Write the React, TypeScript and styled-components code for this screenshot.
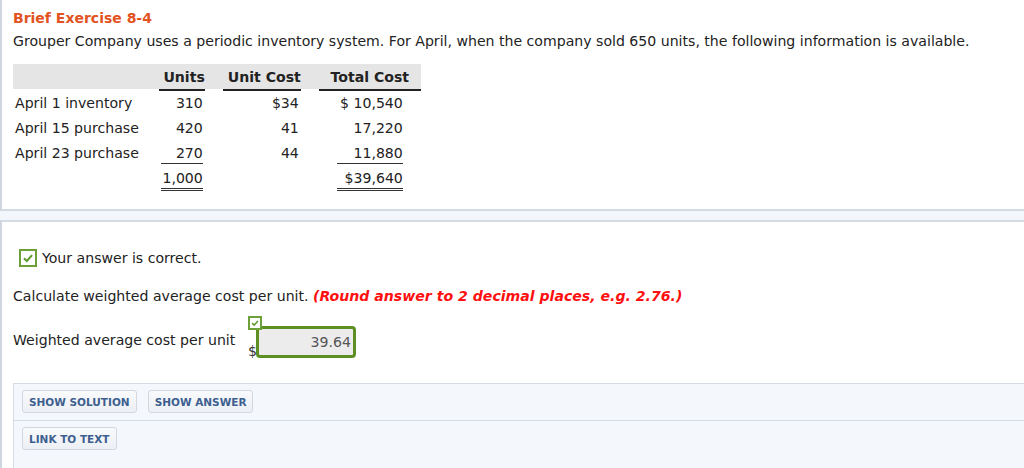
import React from 'react';
import styled, { createGlobalStyle } from 'styled-components';

const GlobalStyle = createGlobalStyle`
	html, body {
		margin: 0;
		padding: 0;
		background: #f3f6fa;
	}
	body {
		font-family: 'DejaVu Sans', Verdana, sans-serif;
		font-size: 14.1px;
		color: #222;
	}
`;

type Row = {
	label: string;
	units: string;
	unitCost: string;
	total: string;
	lineUnder?: boolean;
};

const rows: Row[] = [
	{ label: 'April 1 inventory', units: '310', unitCost: '$34', total: '$ 10,540' },
	{ label: 'April 15 purchase', units: '420', unitCost: '41', total: '17,220' },
	{ label: 'April 23 purchase', units: '270', unitCost: '44', total: '11,880', lineUnder: true },
];

const CheckIcon = ({ size }: { size: number }) => (
	<svg width={size} height={size} viewBox="0 0 12 12">
		<path d="M2.5 6.2 L5 8.5 L9.5 3.5" fill="none" stroke="#5f9a2b" strokeWidth="1.8" />
	</svg>
);

const App: React.FC = () => {
	return (
		<>
			<GlobalStyle />
			<Page>
				<QuestionPanel>
					<Title>Brief Exercise 8-4</Title>
					<Intro>
						Grouper Company uses a periodic inventory system. For April, when the company sold 650 units, the
						following information is available.
					</Intro>
					<DataTable>
						<thead>
							<tr>
								<HeadCell />
								<HeadCell $w={46}>Units</HeadCell>
								<Gap />
								<HeadCell $w={78}>Unit Cost</HeadCell>
								<Gap />
								<HeadCell $w={102} $center>
									Total Cost
								</HeadCell>
							</tr>
						</thead>
						<tbody>
							{rows.map((r) => (
								<tr key={r.label}>
									<LabelCell>{r.label}</LabelCell>
									<NumCell>
										<Figure $under={r.lineUnder ? 'single' : undefined}>{r.units}</Figure>
									</NumCell>
									<td />
									<NumCell>
										<Figure>{r.unitCost}</Figure>
									</NumCell>
									<td />
									<NumCell $padRight={18}>
										<Figure $under={r.lineUnder ? 'single' : undefined} $minW={66}>
											{r.total}
										</Figure>
									</NumCell>
								</tr>
							))}
							<tr>
								<LabelCell />
								<NumCell>
									<Figure $under="double">1,000</Figure>
								</NumCell>
								<td />
								<NumCell />
								<td />
								<NumCell $padRight={18}>
									<Figure $under="double" $minW={66}>
										$39,640
									</Figure>
								</NumCell>
							</tr>
						</tbody>
					</DataTable>
				</QuestionPanel>
				<AnswerPanel>
					<Correct>
						<CheckBox $size={18}>
							<CheckIcon size={14} />
						</CheckBox>
						Your answer is correct.
					</Correct>
					<Prompt>
						Calculate weighted average cost per unit. <Hint>(Round answer to 2 decimal places, e.g. 2.76.)</Hint>
					</Prompt>
					<AnswerRow>
						<AnswerLabel>Weighted average cost per unit</AnswerLabel>
						<InputWrap>
							<SmallCheck>
								<CheckBox $size={14}>
									<CheckIcon size={10} />
								</CheckBox>
							</SmallCheck>
							<Dollar>$</Dollar>
							<AnswerInput>39.64</AnswerInput>
						</InputWrap>
					</AnswerRow>
					<ActionBar>
						<ActionRow>
							<ActionButton>SHOW SOLUTION</ActionButton>
							<ActionButton>SHOW ANSWER</ActionButton>
						</ActionRow>
						<ActionRow>
							<ActionButton>LINK TO TEXT</ActionButton>
						</ActionRow>
					</ActionBar>
				</AnswerPanel>
			</Page>
		</>
	);
};

const Page = styled.div`
	display: flex;
	flex-direction: column;
	gap: 9px;
	width: 1024px;
`;

const QuestionPanel = styled.section`
	background: #fff;
	border-left: 2px solid #cfd6e0;
	border-bottom: 2px solid #d4dbe5;
	padding: 9px 0 18px 11px;
	height: 182px;
`;

const Title = styled.h2`
	margin: 0;
	color: #e2531f;
	font-size: 14px;
	font-weight: bold;
	line-height: 18px;
`;

const Intro = styled.p`
	margin: 4px 0 0;
	line-height: 20px;
`;

const DataTable = styled.table`
	margin-top: 13px;
	border-collapse: collapse;
	font-size: 14.1px;
	thead tr {
		background: #e5e5e5;
	}
`;

const HeadCell = styled.th<{ $w?: number; $center?: boolean }>`
	width: ${(p) => (p.$w ? `${p.$w}px` : 'auto')};
	padding: 3px 0 2px;
	font-weight: bold;
	text-align: ${(p) => (p.$center ? 'center' : 'right')};
	border-bottom: ${(p) => (p.$w ? '2px solid #222' : '2px solid #fff')};
	line-height: 20px;
`;

const Gap = styled.th`
	width: 16px;
	border-bottom: 2px solid #fff;
`;

const LabelCell = styled.td`
	padding: 1px 20px 1px 2px;
	line-height: 23px;
	white-space: nowrap;
`;

const NumCell = styled.td<{ $padRight?: number }>`
	text-align: right;
	padding: 1px ${(p) => p.$padRight ?? 2}px 1px 0;
	line-height: 23px;
	vertical-align: top;
`;

const Figure = styled.span<{ $under?: 'single' | 'double'; $minW?: number }>`
	display: inline-block;
	text-align: right;
	min-width: ${(p) => p.$minW ?? 42}px;
	line-height: 20px;
	border-bottom: ${(p) =>
		p.$under === 'double' ? '3px double #333' : p.$under === 'single' ? '1px solid #333' : '1px solid transparent'};
`;

const AnswerPanel = styled.section`
	background: #fff;
	border-left: 2px solid #cfd6e0;
	border-top: 2px solid #d4dbe5;
	padding: 27px 0 0 11px;
	flex: 1;
`;

const Correct = styled.div`
	display: flex;
	align-items: center;
	gap: 5px;
	margin-left: 6px;
`;

const CheckBox = styled.span<{ $size: number }>`
	display: inline-flex;
	align-items: center;
	justify-content: center;
	box-sizing: border-box;
	width: ${(p) => p.$size}px;
	height: ${(p) => p.$size}px;
	border: 2px solid #6ea03a;
	background: #fff;
`;

const Prompt = styled.p`
	margin: 20px 0 0;
	line-height: 18px;
`;

const Hint = styled.em`
	color: #ff1010;
	font-weight: bold;
`;

const AnswerRow = styled.div`
	display: flex;
	align-items: flex-end;
	margin-top: 11px;
`;

const AnswerLabel = styled.span`
	line-height: 18px;
	padding-bottom: 9px;
	width: 235px;
`;

const InputWrap = styled.div`
	position: relative;
	display: flex;
	align-items: flex-end;
	padding-top: 10px;
`;

const SmallCheck = styled.span`
	position: absolute;
	left: 0;
	top: 0;
	display: flex;
`;

const Dollar = styled.span`
	line-height: 14px;
	color: #333;
	margin-right: -1px;
`;

const AnswerInput = styled.div`
	box-sizing: border-box;
	width: 100px;
	height: 32px;
	border: 3px solid #5d8f23;
	border-radius: 4px;
	background: #ececec;
	color: #555;
	text-align: right;
	padding: 5px 2px 0 0;
`;

const ActionBar = styled.div`
	margin-top: 25px;
	background: #f4f7fb;
	border-top: 1px solid #d5dce6;
	border-left: 1px solid #d5dce6;
	border-bottom: 1px solid #d5dce6;
	height: 86px;
`;

const ActionRow = styled.div`
	display: flex;
	gap: 11px;
	padding: 6px 8px 7px;
	& + & {
		border-top: 1px solid #d5dce6;
	}
`;

const ActionButton = styled.button`
	font-family: 'DejaVu Sans', Verdana, sans-serif;
	font-size: 10.5px;
	font-weight: bold;
	color: #3d5f8f;
	background: linear-gradient(#f9fafc, #eceff4);
	border: 1px solid #d3d8e0;
	border-radius: 3px;
	height: 23px;
	padding: 0 6px;
	cursor: pointer;
`;

export default App;
